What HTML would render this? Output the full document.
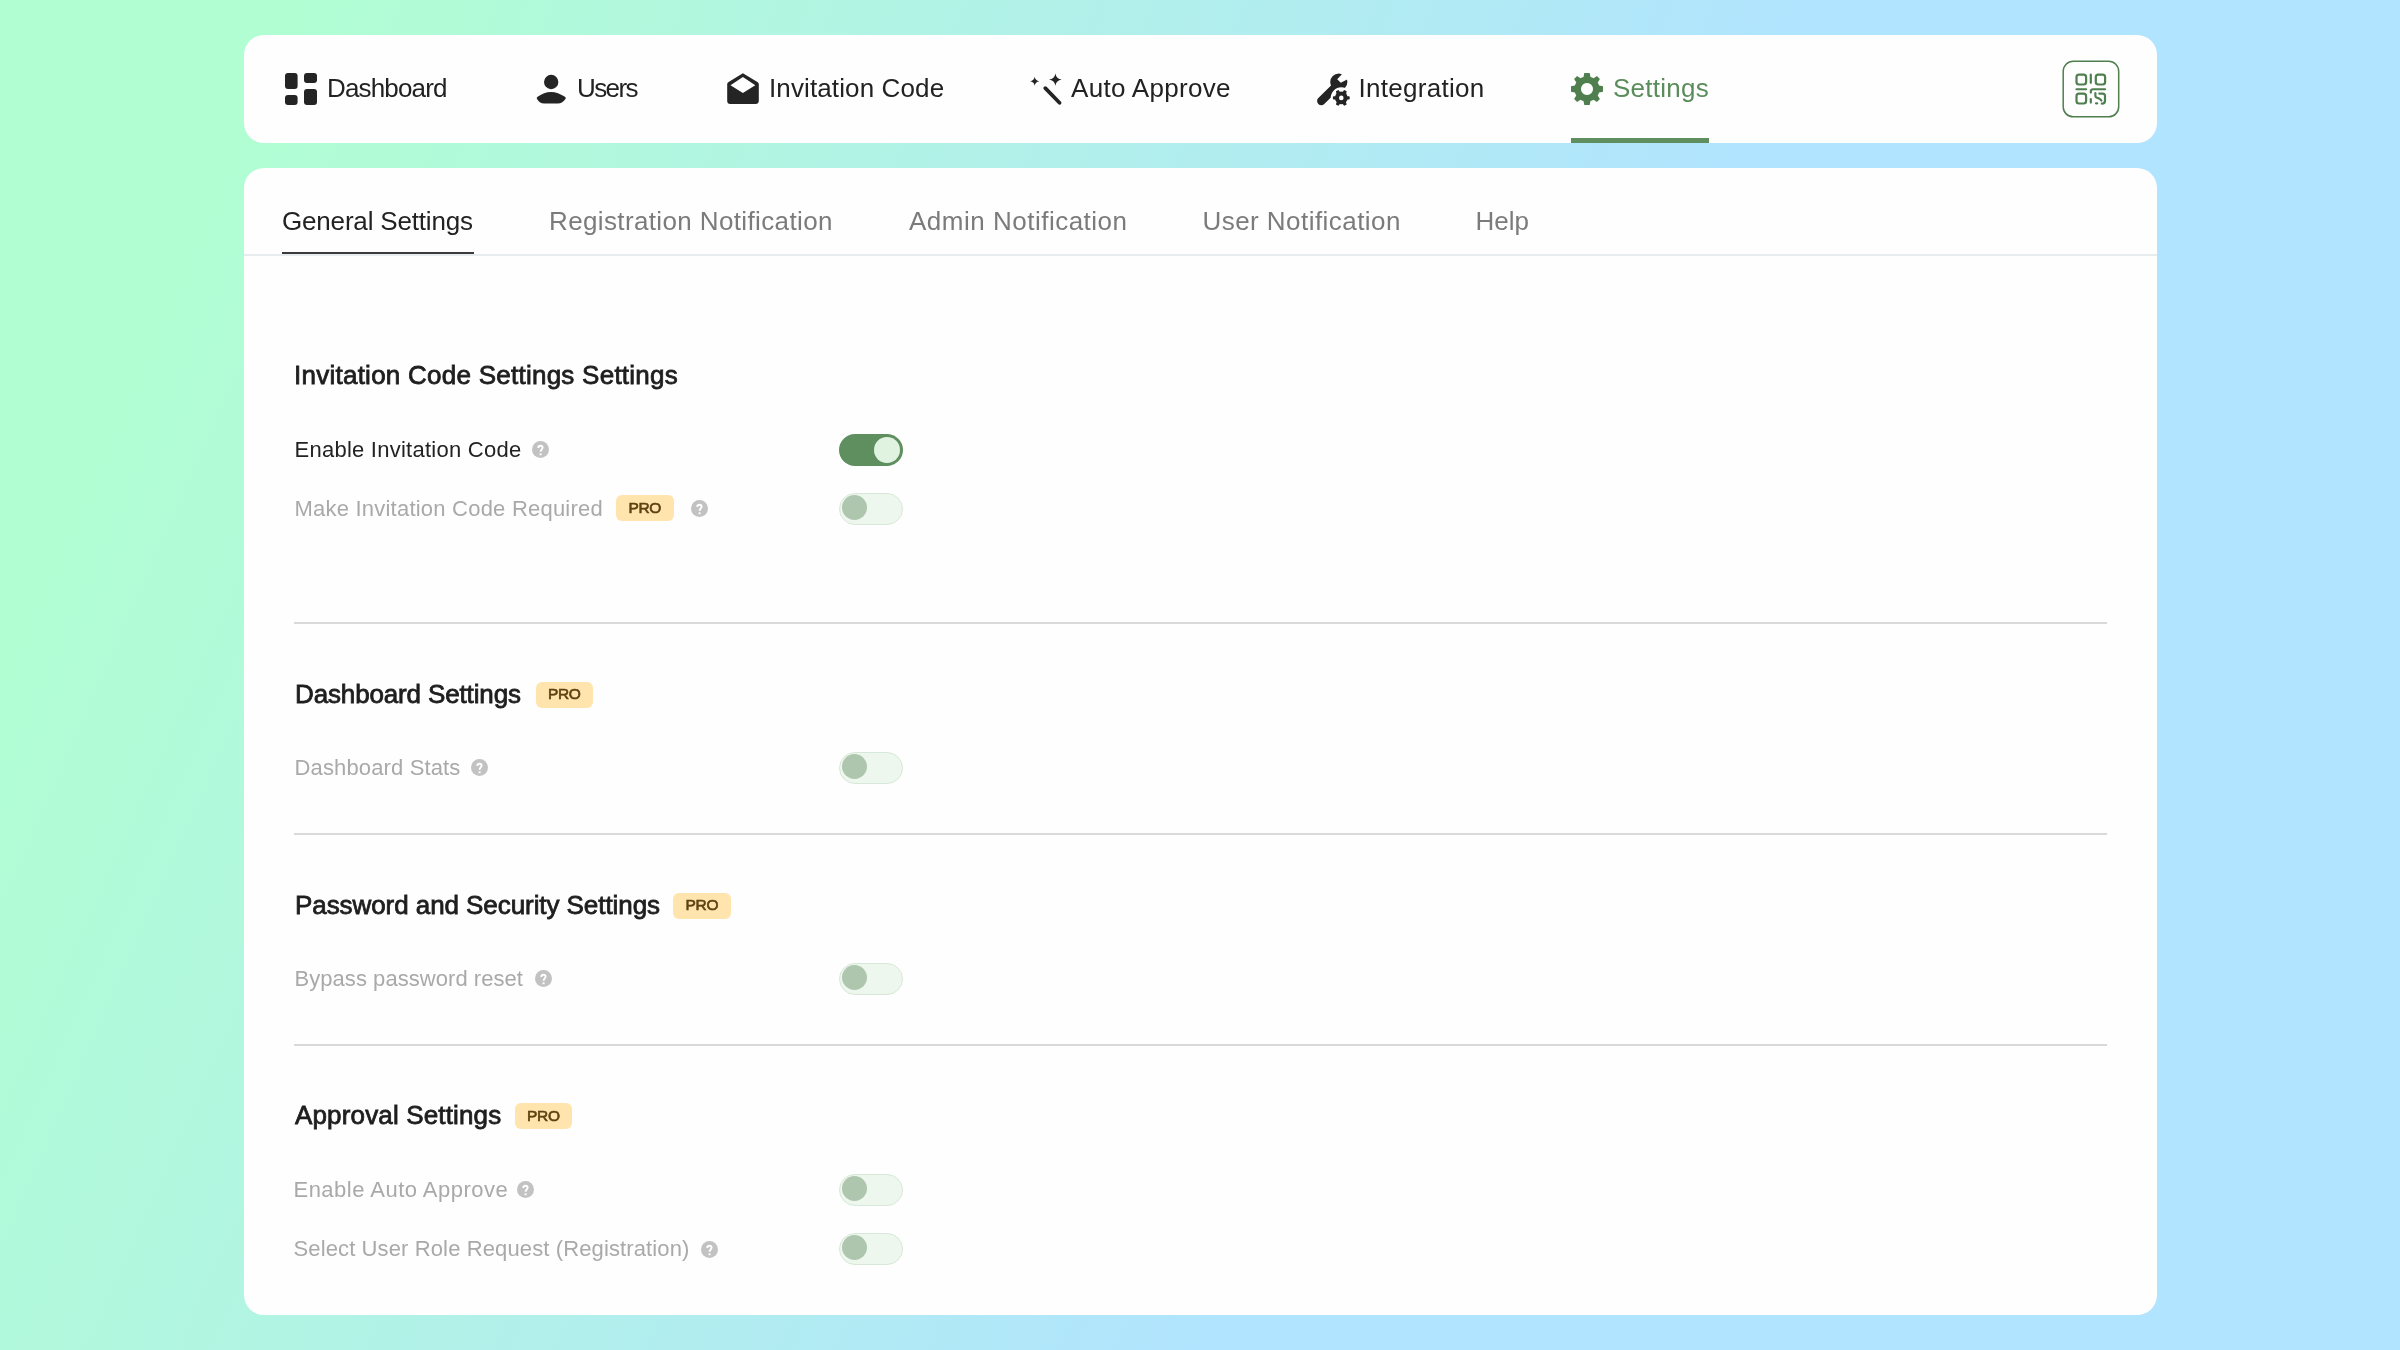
<!DOCTYPE html>
<html><head><meta charset="utf-8">
<style>
*{box-sizing:border-box;margin:0;padding:0}
html,body{width:2400px;height:1350px;overflow:hidden}
body{position:relative;will-change:transform;font-family:"Liberation Sans",sans-serif;background:linear-gradient(114deg,#b1fed3 10%,#b1e4fe 60%)}
.card{position:absolute;left:243.5px;width:1913px;background:#fefefe;border-radius:20px}
.t{position:absolute;white-space:nowrap;line-height:1}
.nav{font-size:26px;color:#222}
.ic{position:absolute}
.tab{font-size:26px;color:#7b7b7b}
.h{font-size:26px;color:#1e1e1e;-webkit-text-stroke:0.8px #1e1e1e}
.lb{font-size:22px;color:#a9a9a9}
.pro{position:absolute;height:26px;width:57.5px;background:#ffe4ad;border-radius:6px}
.pro span{position:absolute;left:0;right:0;top:4.5px;text-align:center;font-weight:normal;font-size:15.5px;line-height:1;color:#5e4213;-webkit-text-stroke:0.6px #5e4213;letter-spacing:-0.3px}
.tg{position:absolute;left:839px;width:64px;height:32px;border-radius:16px;background:#eef7ee;border:1.8px solid #d8e8d8}
.tg::after{content:"";position:absolute;left:2px;top:1.1px;width:25px;height:25px;border-radius:50%;background:#adc6ad}
.tg.on{background:#5f8f5f;border:none}
.tg.on::after{left:34.8px;top:3.2px;width:25.8px;height:25.8px;background:#e0f3e0}
.div{position:absolute;left:294px;width:1813px;height:2px;background:#d9d9d9}
.hp{position:absolute;width:17px;height:17px}
</style></head><body>

<div class="card" style="top:35px;height:108px"></div>
<div class="card" style="top:168px;height:1147px"></div>

<!-- NAV -->
<svg class="ic" style="left:285px;top:73px" width="32" height="32" viewBox="0 0 32 32">
<rect x="0" y="0" width="12.6" height="16" rx="3" fill="#242424"/>
<rect x="19" y="0" width="13" height="10" rx="3" fill="#242424"/>
<rect x="0" y="22" width="12.6" height="10" rx="3" fill="#242424"/>
<rect x="19" y="16" width="13" height="16" rx="3" fill="#242424"/>
</svg>
<div class="t nav" style="left:327px;top:75px;letter-spacing:-0.85px">Dashboard</div>

<svg class="ic" style="left:536px;top:73px" width="32" height="32" viewBox="0 0 32 32">
<circle cx="15.2" cy="9" r="7.2" fill="#242424"/>
<path d="M0.9 25.7 C0.5 25 1 24.2 2 23.5 C6 20.8 10 19 15 19 C20 19 24 20.8 28.5 23.5 C29.5 24.2 30 25 29.6 25.7 C27.5 28.5 25.5 30.5 21.5 30.6 L8.5 30.6 C4.5 30.5 2.6 28.5 0.9 25.7 Z" fill="#242424"/>
</svg>
<div class="t nav" style="left:577px;top:75px;letter-spacing:-1.6px">Users</div>

<svg class="ic" style="left:727px;top:73px" width="32" height="32" viewBox="0 0 32 32">
<path fill-rule="evenodd" fill="#242424" d="M15.9 0.3 L30.4 9 C31.3 9.6 31.8 10.5 31.8 11.6 L31.8 28 C31.8 29.8 30.4 31 28.7 31 L3.2 31 C1.4 31 0.2 29.8 0.2 28 L0.2 11.6 C0.2 10.5 0.7 9.6 1.6 9 Z M3.5 12.3 L15.9 20 L28.3 12.3 L15.9 3.9 Z"/>
</svg>
<div class="t nav" style="left:769px;top:75px;letter-spacing:0.12px">Invitation Code</div>

<svg class="ic" style="left:1026px;top:73px" width="40" height="32" viewBox="0 0 40 32">
<path fill="#242424" d="M8.7 3.7 Q9.3 7.5 13.3 8.2 Q9.3 8.9 8.7 12.7 Q8.1 8.9 4.1 8.2 Q8.1 7.5 8.7 3.7 Z"/>
<path fill="#242424" d="M29.4 0.4 Q30.2 5.8 35.8 6.6 Q30.2 7.4 29.4 12.8 Q28.6 7.4 23 6.6 Q28.6 5.8 29.4 0.4 Z"/>
<line x1="19.3" y1="15.1" x2="33.5" y2="29.8" stroke="#242424" stroke-width="3.7" stroke-linecap="round"/>
</svg>
<div class="t nav" style="left:1071px;top:75px;letter-spacing:0.3px">Auto Approve</div>

<svg class="ic" style="left:1316px;top:73px" width="34" height="34" viewBox="0 0 34 34">
<line x1="5.3" y1="28.1" x2="18" y2="15.5" stroke="#242424" stroke-width="8.4" stroke-linecap="round"/>
<circle cx="22.8" cy="9" r="8.6" fill="#242424"/>
<path d="M24.8 9.8 L21.2 6.2 L27.5 -0.5 L34 5 Z" fill="#fff"/>
<circle cx="25.3" cy="24.9" r="10.6" fill="#fff"/>
<g fill="#242424"><circle cx="25.3" cy="24.9" r="6.4"/>
<rect x="16.9" y="23.2" width="16.8" height="3.4" rx="0.8"/>
<rect x="16.9" y="23.2" width="16.8" height="3.4" rx="0.8" transform="rotate(60 25.3 24.9)"/>
<rect x="16.9" y="23.2" width="16.8" height="3.4" rx="0.8" transform="rotate(120 25.3 24.9)"/></g>
<circle cx="25.3" cy="24.9" r="2.3" fill="#fff"/>
</svg>
<div class="t nav" style="left:1358.5px;top:75px;letter-spacing:0.28px">Integration</div>

<svg class="ic" style="left:1571px;top:73px" width="32" height="32" viewBox="0 0 32 32">
<path fill="#4f7e4f" fill-rule="evenodd" d="M13.3 0 L18.7 0 L19.5 3.9 C20.6 4.2 21.7 4.7 22.6 5.3 L25.9 3.1 L28.9 6.1 L26.7 9.4 C27.3 10.3 27.8 11.4 28.1 12.5 L32 13.3 L32 18.7 L28.1 19.5 C27.8 20.6 27.3 21.7 26.7 22.6 L28.9 25.9 L25.9 28.9 L22.6 26.7 C21.7 27.3 20.6 27.8 19.5 28.1 L18.7 32 L13.3 32 L12.5 28.1 C11.4 27.8 10.3 27.3 9.4 26.7 L6.1 28.9 L3.1 25.9 L5.3 22.6 C4.7 21.7 4.2 20.6 3.9 19.5 L0 18.7 L0 13.3 L3.9 12.5 C4.2 11.4 4.7 10.3 5.3 9.4 L3.1 6.1 L6.1 3.1 L9.4 5.3 C10.3 4.7 11.4 4.2 12.5 3.9 Z M16 10 A6 6 0 1 0 16.01 10 Z"/>
</svg>
<div class="t nav" style="left:1613px;top:75px;color:#5b8c5b;letter-spacing:0.25px">Settings</div>
<div style="position:absolute;left:1571px;top:138px;width:138px;height:5px;background:#5f8f5f"></div>

<svg class="ic" style="left:2062px;top:60px" width="58" height="58" viewBox="0 0 58 58">
<rect x="1.2" y="1.3" width="55.5" height="55.5" rx="10" fill="none" stroke="#4f7e4f" stroke-width="1.5"/>
<g fill="none" stroke="#4f7e4f" stroke-width="2.2" stroke-linecap="round">
<rect x="14.5" y="14.7" width="9.6" height="9.8" rx="2.5"/>
<rect x="33.8" y="14.7" width="9.3" height="9.8" rx="2.5"/>
<rect x="14.5" y="33.7" width="9.6" height="9.8" rx="2.5"/>
<line x1="28.8" y1="14.7" x2="28.8" y2="22.8"/>
<line x1="14.5" y1="29.25" x2="24.1" y2="29.25"/>
<path d="M28.8 32.6 L28.8 31.6 Q28.8 29.25 31.1 29.25 L43.1 29.25"/>
<line x1="28.8" y1="39" x2="28.8" y2="42.6"/>
<path d="M33.4 33.2 L33.4 36 Q33.4 37.3 35 37.7 Q38.6 38.6 39.4 40.6"/>
<path d="M37.3 33.6 L40.6 33.6 Q43 33.6 43 36 L43 40.8 Q43 43.6 40.2 43.6 L39.8 43.6"/>
<line x1="34" y1="43.3" x2="35.2" y2="43.3"/>
</g>
</svg>

<!-- TABS -->
<div class="t tab" style="left:282px;top:208px;color:#222;letter-spacing:-0.18px">General Settings</div>
<div style="position:absolute;left:282px;top:252px;width:191.5px;height:2.5px;background:#3a3a3a"></div>
<div class="t tab" style="left:549px;top:208px;letter-spacing:0.37px">Registration Notification</div>
<div class="t tab" style="left:909px;top:208px;letter-spacing:0.5px">Admin Notification</div>
<div class="t tab" style="left:1202.5px;top:208px;letter-spacing:0.45px">User Notification</div>
<div class="t tab" style="left:1475.5px;top:208px">Help</div>
<div style="position:absolute;left:243.5px;top:254px;width:1913px;height:1.5px;background:#e7ecef"></div>

<!-- SECTION 1 -->
<div class="t h" style="left:294px;top:361.5px;letter-spacing:0.25px">Invitation Code Settings Settings</div>
<div class="t lb" style="left:294.5px;top:439px;color:#222;letter-spacing:0.25px">Enable Invitation Code</div>
<svg class="hp" style="left:532.4px;top:440.7px" viewBox="0 0 17 17"><circle cx="8.5" cy="8.5" r="8.5" fill="#c2c2c2"/><path d="M6.3 6.9 C6.3 5.5 7.3 4.7 8.5 4.7 C9.8 4.7 10.6 5.6 10.6 6.6 C10.6 8.3 8.6 8.5 8.6 10.8" fill="none" stroke="#fff" stroke-width="1.9"/><rect x="7.6" y="12.4" width="2" height="1.8" fill="#fff"/></svg>
<div class="tg on" style="top:434px"></div>

<div class="t lb" style="left:294.5px;top:497.7px;letter-spacing:0.22px">Make Invitation Code Required</div>
<div class="pro" style="left:616px;top:495px"><span>PRO</span></div>
<svg class="hp" style="left:690.7px;top:499.8px" viewBox="0 0 17 17"><circle cx="8.5" cy="8.5" r="8.5" fill="#c2c2c2"/><path d="M6.3 6.9 C6.3 5.5 7.3 4.7 8.5 4.7 C9.8 4.7 10.6 5.6 10.6 6.6 C10.6 8.3 8.6 8.5 8.6 10.8" fill="none" stroke="#fff" stroke-width="1.9"/><rect x="7.6" y="12.4" width="2" height="1.8" fill="#fff"/></svg>
<div class="tg" style="top:493px"></div>

<div class="div" style="top:622px"></div>

<!-- SECTION 2 -->
<div class="t h" style="left:295px;top:680.5px;letter-spacing:-0.14px">Dashboard Settings</div>
<div class="pro" style="left:535.5px;top:681.5px"><span>PRO</span></div>
<div class="t lb" style="left:294.5px;top:757.4px;letter-spacing:0.14px">Dashboard Stats</div>
<svg class="hp" style="left:471.4px;top:759.3px" viewBox="0 0 17 17"><circle cx="8.5" cy="8.5" r="8.5" fill="#c2c2c2"/><path d="M6.3 6.9 C6.3 5.5 7.3 4.7 8.5 4.7 C9.8 4.7 10.6 5.6 10.6 6.6 C10.6 8.3 8.6 8.5 8.6 10.8" fill="none" stroke="#fff" stroke-width="1.9"/><rect x="7.6" y="12.4" width="2" height="1.8" fill="#fff"/></svg>
<div class="tg" style="top:752px"></div>

<div class="div" style="top:833px"></div>

<!-- SECTION 3 -->
<div class="t h" style="left:295px;top:892px;letter-spacing:-0.07px">Password and Security Settings</div>
<div class="pro" style="left:673.2px;top:892.5px"><span>PRO</span></div>
<div class="t lb" style="left:294.5px;top:967.8px;letter-spacing:0.05px">Bypass password reset</div>
<svg class="hp" style="left:535.1px;top:969.8px" viewBox="0 0 17 17"><circle cx="8.5" cy="8.5" r="8.5" fill="#c2c2c2"/><path d="M6.3 6.9 C6.3 5.5 7.3 4.7 8.5 4.7 C9.8 4.7 10.6 5.6 10.6 6.6 C10.6 8.3 8.6 8.5 8.6 10.8" fill="none" stroke="#fff" stroke-width="1.9"/><rect x="7.6" y="12.4" width="2" height="1.8" fill="#fff"/></svg>
<div class="tg" style="top:963px"></div>

<div class="div" style="top:1044px"></div>

<!-- SECTION 4 -->
<div class="t h" style="left:295px;top:1102px;letter-spacing:0.15px">Approval Settings</div>
<div class="pro" style="left:514.6px;top:1103px"><span>PRO</span></div>
<div class="t lb" style="left:293.5px;top:1179.1px;letter-spacing:0.48px">Enable Auto Approve</div>
<svg class="hp" style="left:517.2px;top:1181px" viewBox="0 0 17 17"><circle cx="8.5" cy="8.5" r="8.5" fill="#c2c2c2"/><path d="M6.3 6.9 C6.3 5.5 7.3 4.7 8.5 4.7 C9.8 4.7 10.6 5.6 10.6 6.6 C10.6 8.3 8.6 8.5 8.6 10.8" fill="none" stroke="#fff" stroke-width="1.9"/><rect x="7.6" y="12.4" width="2" height="1.8" fill="#fff"/></svg>
<div class="tg" style="top:1174px"></div>

<div class="t lb" style="left:293.5px;top:1238.3px;letter-spacing:0.12px">Select User Role Request (Registration)</div>
<svg class="hp" style="left:701px;top:1240.5px" viewBox="0 0 17 17"><circle cx="8.5" cy="8.5" r="8.5" fill="#c2c2c2"/><path d="M6.3 6.9 C6.3 5.5 7.3 4.7 8.5 4.7 C9.8 4.7 10.6 5.6 10.6 6.6 C10.6 8.3 8.6 8.5 8.6 10.8" fill="none" stroke="#fff" stroke-width="1.9"/><rect x="7.6" y="12.4" width="2" height="1.8" fill="#fff"/></svg>
<div class="tg" style="top:1233px"></div>

</body></html>
